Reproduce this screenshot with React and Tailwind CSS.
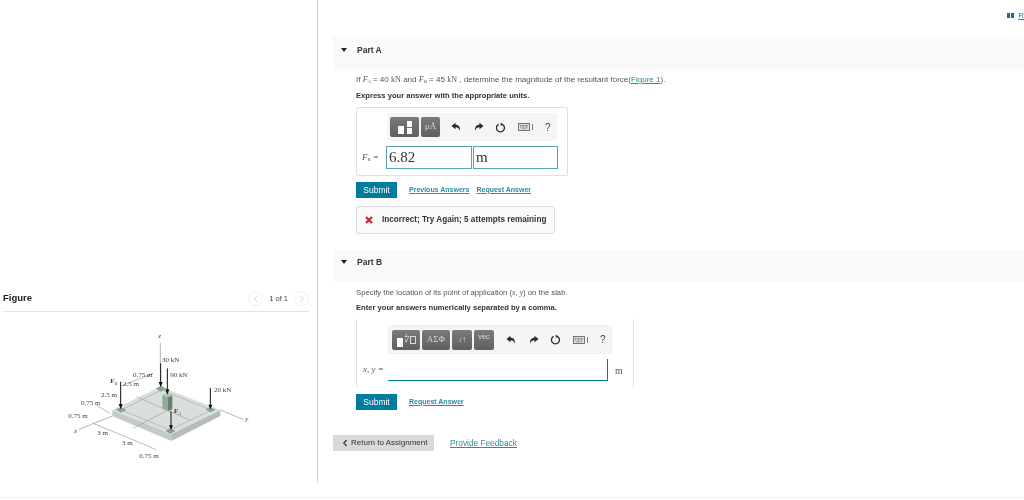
import { ChevronLeft, ChevronRight } from 'lucide-react';

const sans = "font-['Liberation_Sans',Arial,sans-serif]";
const serif = "font-['Liberation_Serif','Times_New_Roman',serif]";

function Caret() {
  return <span className="w-0 h-0 border-x-[3.5px] border-x-transparent border-t-[4px] border-t-[#222] mr-[10px]" />;
}

function PartHeader({ label, className }) {
  return (
    <div className={`flex items-center pl-[8px] pb-[8px] bg-[#f9f9f9] text-[8.5px] font-bold text-[#333] ${className}`}>
      <Caret />
      {label}
    </div>
  );
}

function ToolButton({ className, children }) {
  return (
    <div className={`h-[20px] rounded-[2px] bg-gradient-to-b from-[#7b7b7b] to-[#5f5f5f] flex items-center justify-center text-[#d8d8d8] ${className}`}>
      {children}
    </div>
  );
}

// undo, redo, reset, keyboard and help icons, shared by both toolbars
function ToolActions({ className }) {
  return (
    <div className={`flex items-center text-[#333] ${className}`}>
      <svg width="10" height="10" viewBox="0 0 10 10" fill="#2a2a2a">
        <path d="M0.5 4 L4.5 0.8 V2.8 C7.5 2.8 9.3 4.8 9 8.8 C8 6.4 6.8 5.3 4.5 5.3 V7.2 Z" />
      </svg>
      <svg className="ml-[13px]" width="10" height="10" viewBox="0 0 10 10" fill="#2a2a2a">
        <path d="M9.5 4 L5.5 0.8 V2.8 C2.5 2.8 0.7 4.8 1 8.8 C2 6.4 3.2 5.3 5.5 5.3 V7.2 Z" />
      </svg>
      <svg className="ml-[11px]" width="11" height="11" viewBox="0 0 11 11" fill="none" stroke="#2a2a2a" strokeWidth="1.3">
        <path d="M7.3 2.3 A4 4 0 1 1 3.6 2.3" />
        <path d="M5.6 0.6 L8.2 2.2 L5.8 4 Z" fill="#2a2a2a" stroke="none" />
      </svg>
      <svg className="ml-[12px]" width="16" height="8" viewBox="0 0 16 8" fill="none">
        <rect x="0.5" y="0.5" width="11" height="7" fill="#ddd" stroke="#777" />
        <path d="M2 2.5 H10 M2 4 H10 M3.5 5.8 H8.5" stroke="#666" strokeWidth="0.8" strokeDasharray="1 0.5" />
        <path d="M14.5 1 V7" stroke="#777" />
      </svg>
      <span className="ml-[11px] text-[10px] text-[#444]">?</span>
    </div>
  );
}

function Figure() {
  return (
    <svg className="ml-[50px] mt-[18px]" width="210" height="130" viewBox="0 0 630 390">
      {/* slab */}
      <path d="M178 240 L355 312 V333 L178 258 Z" fill="#c3cbc6" />
      <path d="M355 312 L502 240 V258 L355 333 Z" fill="#b5bdb8" />
      <path d="M322 170 L502 240 L355 312 L178 240 Z" fill="#dadfdc" />
      <path d="M205 240 L325 180 L475 240 L352 300 Z" fill="none" stroke="#a5aca7" strokeWidth="2" />
      <path d="M250 200 L410 270 M345 240 L240 295" stroke="#868c88" strokeWidth="1.5" />
      {/* axes */}
      <path d="M322 38 V170 M502 240 L570 268 M178 258 L78 298" stroke="#8a908c" strokeWidth="2" fill="none" />
      {/* dimension lines */}
      <path d="M120 280 L285 348 M285 348 L310 360 M170 250 L130 225 M205 168 L300 130 M300 130 L278 143" stroke="#777" strokeWidth="1.5" fill="none" />
      {/* column and pads */}
      <path d="M328 195 L345 202 V243 L328 236 Z" fill="#93a998" />
      <path d="M345 202 L358 196 V238 L345 243 Z" fill="#667f6e" />
      <path d="M328 195 L342 188 L358 196 L345 202 Z" fill="#b0c2b5" />
      <path d="M188 238 L205 232 L220 240 L203 248 Z M308 175 L325 168 L340 176 L323 185 Z M458 238 L472 232 L488 239 L472 247 Z M337 302 L352 295 L368 303 L352 311 Z" fill="#86a291" />
      {/* forces */}
      <g stroke="#111" strokeWidth="3" fill="#111">
        <path d="M203 155 V225" />
        <path d="M323 100 V158" />
        <path d="M343 115 V180" />
        <path d="M472 174 V226" />
        <path d="M354 244 V288" />
      </g>
      <path d="M197 222 H209 L203 238 Z M317 156 H329 L323 172 Z M337 178 H349 L343 194 Z M466 224 H478 L472 238 Z M348 286 H360 L354 300 Z" fill="#111" />
      <g className={serif} fontSize="21" fill="#444">
        <text x="327" y="97">30 kN</text>
        <text x="352" y="140">90 kN</text>
        <text x="483" y="187">20 kN</text>
        <text x="240" y="140">0.75 m</text>
        <text x="210" y="168">2.5 m</text>
        <text x="144" y="202">2.5 m</text>
        <text x="84" y="224">0.75 m</text>
        <text x="46" y="264">0.75 m</text>
        <text x="133" y="316">3 m</text>
        <text x="207" y="346">3 m</text>
        <text x="259" y="383">0.75 m</text>
        <text x="172" y="160" fontWeight="bold">F</text>
        <text x="185" y="164" fontSize="13" fontStyle="italic">B</text>
        <text x="363" y="250" fontWeight="bold">F</text>
        <text x="376" y="254" fontSize="13" fontStyle="italic">A</text>
        <text x="316" y="24" fontStyle="italic">z</text>
        <text x="63" y="308" fontStyle="italic">x</text>
        <text x="577" y="274" fontStyle="italic">y</text>
      </g>
    </svg>
  );
}

function FigurePanel() {
  return (
    <div className="w-[318px] h-[483px] border-r border-[#c9d3e0] pt-[291px] pr-[8px] pl-[3px]">
      <div className="flex items-center justify-between h-[21px] border-b border-[#e3e3e3] pb-[5px] text-[#222]">
        <span className="text-[9.5px] font-bold">Figure</span>
        <div className="flex items-center text-[7.5px] text-[#444]">
          <span className="w-[15px] h-[15px] rounded-full border border-[#eeeeee] flex items-center justify-center text-[#c4c4c4]">
            <ChevronLeft size={10} />
          </span>
          <span className="mx-[6px]">1 of 1</span>
          <span className="w-[15px] h-[15px] rounded-full border border-[#eeeeee] flex items-center justify-center text-[#c4c4c4]">
            <ChevronRight size={10} />
          </span>
        </div>
      </div>
      <Figure />
    </div>
  );
}

function PartA() {
  return (
    <>
      <PartHeader label="Part A" className="h-[34px]" />
      <div className="ml-[23px]">
        <p className="mt-[1px] h-[16px] leading-[16px] text-[8.05px] text-[#555]">
          If <i className={serif}>F<sub className="text-[5px]">A</sub></i> = 40 <span className={serif}>kN</span> and{' '}
          <i className={serif}>F<sub className="text-[5px]">B</sub></i> = 45 <span className={serif}>kN</span> , determine the magnitude of the resultant force(
          <span className="text-[#2b8aa5] underline">Figure 1</span>).
        </p>
        <p className="h-[16px] leading-[16px] text-[7.6px] font-bold text-[#333]">Express your answer with the appropriate units.</p>
        <div className="mt-[3px] w-[212px] h-[69px] border border-[#e0e0e0] rounded-[2px] pt-[5px] pl-[30px]">
          <div className="w-[170px] h-[28px] bg-[#f5f5f5] rounded-[3px] flex items-center pl-[3px]">
            <ToolButton className="w-[29px] gap-[3px]">
              <span className="w-[6px] h-[8px] bg-white self-end mb-[3px]" />
              <span className="flex flex-col gap-[1px]">
                <span className="w-[5px] h-[6px] bg-white" />
                <span className="w-[5px] h-[6px] bg-white" />
              </span>
            </ToolButton>
            <ToolButton className={`w-[19px] ml-[2px] text-[9px] ${serif}`}>µÅ</ToolButton>
            <ToolActions className="ml-[11px]" />
          </div>
          <div className="flex items-center mt-[5px] -ml-[25px]">
            <span className={`w-[24px] text-[9px] italic text-[#555] ${serif}`}>
              F<sub className="text-[5px]">R</sub> =
            </span>
            <div className={`w-[86px] h-[23px] border border-[#56a3b8] pl-[2px] text-[15px] leading-[21px] text-[#333] ${serif}`}>6.82</div>
            <div className={`w-[85px] h-[23px] ml-[1px] border border-[#56a3b8] pl-[2px] text-[15px] leading-[20px] text-[#333] ${serif}`}>m</div>
          </div>
        </div>
        <div className="flex items-center mt-[6px]">
          <div className="w-[41px] h-[16px] bg-[#007c9e] text-white text-[8.5px] leading-[16px] text-center">Submit</div>
          <span className="ml-[12px] text-[7px] font-bold text-[#2b8aa5] underline">Previous Answers</span>
          <span className="ml-[7px] text-[7px] font-bold text-[#2b8aa5] underline">Request Answer</span>
        </div>
        <div className="mt-[8px] w-[199px] h-[28px] border border-[#dddddd] rounded-[2px] bg-[#fafafa] flex items-center pl-[8px]">
          <svg width="8" height="8" viewBox="0 0 8 8" stroke="#d8232a" strokeWidth="2.2">
            <path d="M1 1 L7 7 M7 1 L1 7" />
          </svg>
          <span className="ml-[9px] text-[8.2px] font-bold text-[#333]">Incorrect; Try Again; 5 attempts remaining</span>
        </div>
      </div>
    </>
  );
}

function PartB() {
  return (
    <>
      <PartHeader label="Part B" className="h-[32px] mt-[16px]" />
      <div className="ml-[23px]">
        <p className="mt-[3px] h-[15px] leading-[15px] text-[7.7px] text-[#555]">
          Specify the location of its point of application (<i className={serif}>x</i>, <i className={serif}>y</i>) on the slab.
        </p>
        <p className="h-[15px] leading-[15px] text-[7.6px] font-bold text-[#333]">Enter your answers numerically separated by a comma.</p>
        <div className="mt-[4px] w-[278px] h-[69px] border-x border-[#e0e0e0] rounded-[3px] pt-[6px] pl-[31px]">
          <div className="w-[224px] h-[29px] bg-[#f5f5f5] rounded-[4px] border border-[#eeeeee] flex items-center pl-[3px]">
            <ToolButton className="w-[28px] gap-[1px] text-[8px]">
              <span className="w-[6px] h-[9px] bg-white self-end mb-[3px]" />
              <span className={serif}>∜</span>
              <span className="w-[6px] h-[8px] border border-[#d8d8d8]" />
            </ToolButton>
            <ToolButton className={`w-[28px] ml-[2px] text-[9px] ${serif}`}>ΑΣΦ</ToolButton>
            <ToolButton className="w-[20px] ml-[2px] text-[8px]">↓↑</ToolButton>
            <ToolButton className="w-[20px] ml-[2px] text-[7.5px] items-start leading-[14px]">vec</ToolButton>
            <ToolActions className="ml-[12px]" />
          </div>
          <div className="flex items-center mt-[5px] -ml-[25px]">
            <span className={`w-[25px] text-[9px] italic text-[#555] ${serif}`}>x, y =</span>
            <div className="w-[220px] h-[22px] border-r border-b border-[#007c9e]" />
            <span className={`ml-[7px] text-[10px] text-[#555] ${serif}`}>m</span>
          </div>
        </div>
        <div className="flex items-center mt-[6px]">
          <div className="w-[41px] h-[16px] bg-[#007c9e] text-white text-[8.5px] leading-[16px] text-center">Submit</div>
          <span className="ml-[12px] text-[7px] font-bold text-[#2b8aa5] underline">Request Answer</span>
        </div>
      </div>
      <div className="flex items-center mt-[25px]">
        <div className="w-[101px] h-[16px] bg-[#d9d9d9] flex items-center pl-[7px] text-[8px] text-[#333]">
          <ChevronLeft className="mr-[1px]" size={10} strokeWidth={3} />
          Return to Assignment
        </div>
        <span className="ml-[16px] text-[8.3px] text-[#2b8aa5] underline">Provide Feedback</span>
      </div>
    </>
  );
}

export default function App() {
  return (
    <div className={`w-[1024px] h-[500px] overflow-hidden bg-white blur-[0.3px] ${sans}`}>
      <div className="h-[498px] border-b border-[#eeeeee] flex">
        <FigurePanel />
        <div className="w-[706px] pl-[15px]">
          <div className="h-[37px] flex justify-end items-start pt-[12px]">
            <div className="flex items-center text-[#2b7f99]">
              <span className="w-[3px] h-[5px] bg-[#1f6f8b]" />
              <span className="w-[3px] h-[5px] ml-[1px] bg-[#1f6f8b]" />
              <span className="ml-[4px] text-[8px] leading-[7px] underline">R</span>
            </div>
          </div>
          <PartA />
          <PartB />
        </div>
      </div>
    </div>
  );
}
